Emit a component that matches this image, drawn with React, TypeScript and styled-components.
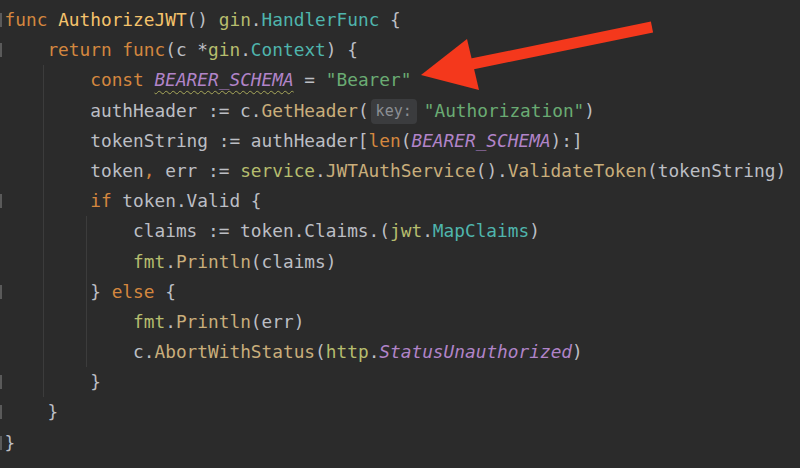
import styled, { createGlobalStyle, css } from "styled-components";

type Kind =
  | "txt"
  | "kw"
  | "fn"
  | "pkg"
  | "type"
  | "call"
  | "str"
  | "const"
  | "wavy"
  | "hint";

type Token = [Kind, string];

type CodeLine = {
  indent: number;
  guides: number[];
  fold?: boolean;
  tokens: Token[];
};

const lines: CodeLine[] = [
  {
    indent: 0,
    guides: [],
    fold: true,
    tokens: [
      ["kw", "func"],
      ["txt", " "],
      ["fn", "AuthorizeJWT"],
      ["txt", "() "],
      ["pkg", "gin"],
      ["txt", "."],
      ["type", "HandlerFunc"],
      ["txt", " {"],
    ],
  },
  {
    indent: 1,
    guides: [],
    fold: true,
    tokens: [
      ["kw", "return"],
      ["txt", " "],
      ["kw", "func"],
      ["txt", "(c *"],
      ["pkg", "gin"],
      ["txt", "."],
      ["type", "Context"],
      ["txt", ") {"],
    ],
  },
  {
    indent: 2,
    guides: [43],
    tokens: [
      ["kw", "const"],
      ["txt", " "],
      ["wavy", "BEARER_SCHEMA"],
      ["txt", " = "],
      ["str", '"Bearer"'],
    ],
  },
  {
    indent: 2,
    guides: [43],
    tokens: [
      ["txt", "authHeader := c."],
      ["call", "GetHeader"],
      ["txt", "("],
      ["hint", "key:"],
      ["str", '"Authorization"'],
      ["txt", ")"],
    ],
  },
  {
    indent: 2,
    guides: [43],
    tokens: [
      ["txt", "tokenString := authHeader["],
      ["kw", "len"],
      ["txt", "("],
      ["const", "BEARER_SCHEMA"],
      ["txt", "):]"],
    ],
  },
  {
    indent: 2,
    guides: [43],
    tokens: [
      ["txt", "token"],
      ["kw", ","],
      ["txt", " err := "],
      ["pkg", "service"],
      ["txt", "."],
      ["call", "JWTAuthService"],
      ["txt", "()."],
      ["call", "ValidateToken"],
      ["txt", "(tokenString)"],
    ],
  },
  {
    indent: 2,
    guides: [43],
    fold: true,
    tokens: [
      ["kw", "if"],
      ["txt", " token.Valid {"],
    ],
  },
  {
    indent: 3,
    guides: [43, 86],
    tokens: [
      ["txt", "claims := token.Claims.("],
      ["pkg", "jwt"],
      ["txt", "."],
      ["type", "MapClaims"],
      ["txt", ")"],
    ],
  },
  {
    indent: 3,
    guides: [43, 86],
    tokens: [
      ["pkg", "fmt"],
      ["txt", "."],
      ["call", "Println"],
      ["txt", "(claims)"],
    ],
  },
  {
    indent: 2,
    guides: [43, 86],
    fold: true,
    tokens: [
      ["txt", "} "],
      ["kw", "else"],
      ["txt", " {"],
    ],
  },
  {
    indent: 3,
    guides: [43, 86],
    tokens: [
      ["pkg", "fmt"],
      ["txt", "."],
      ["call", "Println"],
      ["txt", "(err)"],
    ],
  },
  {
    indent: 3,
    guides: [43, 86],
    tokens: [
      ["txt", "c."],
      ["call", "AbortWithStatus"],
      ["txt", "("],
      ["pkg", "http"],
      ["txt", "."],
      ["const", "StatusUnauthorized"],
      ["txt", ")"],
    ],
  },
  { indent: 2, guides: [43], fold: true, tokens: [["txt", "}"]] },
  { indent: 1, guides: [], fold: true, tokens: [["txt", "}"]] },
  { indent: 0, guides: [], fold: true, tokens: [["txt", "}"]] },
];

const colors: Record<Kind, string> = {
  txt: "#bcbec4",
  kw: "#d4873f",
  fn: "#f5c36c",
  pkg: "#b6bd6e",
  type: "#4fb5ad",
  call: "#c9ae7b",
  str: "#6aab73",
  const: "#b184c8",
  wavy: "#b184c8",
  hint: "#8c8f94",
};

const GlobalStyle = createGlobalStyle`
  html, body {
    margin: 0;
    padding: 0;
    background: #2b2b2b;
  }
  body {
    width: 800px;
    height: 468px;
    overflow: hidden;
  }
`;

const Editor = styled.div`
  position: relative;
  width: 800px;
  height: 468px;
  box-sizing: border-box;
  padding-top: 5px;
  background: #2b2b2b;
  font-family: "DejaVu Sans Mono", "Liberation Mono", monospace;
  font-size: 17.8px;
  overflow: hidden;
`;

const Line = styled.div<{ $indent: number; $guides: number[]; $fold?: boolean }>`
  height: 30.2px;
  line-height: 30.2px;
  white-space: pre;
  box-sizing: border-box;
  padding-left: ${(p) => `calc(4.6px + ${p.$indent * 4}ch)`};
  ${(p) => {
    const layers = p.$guides.map(
      (x) => `linear-gradient(#3c3c3c, #3c3c3c) no-repeat ${x}px 0 / 1px 100%`
    );
    if (p.$fold) {
      layers.push(`linear-gradient(#5a5a5a, #5a5a5a) no-repeat 0 8px / 2px 14px`);
    }
    return layers.length
      ? css`
          background: ${layers.join(", ")};
        `
      : "";
  }}
`;

const Tok = styled.span<{ $kind: Kind }>`
  color: ${(p) => colors[p.$kind]};
  ${(p) =>
    (p.$kind === "const" || p.$kind === "wavy") &&
    css`
      font-style: italic;
    `}
  ${(p) =>
    p.$kind === "wavy" &&
    css`
      text-decoration: underline wavy #a8a85a;
      text-decoration-thickness: 1px;
      text-underline-offset: 4px;
    `}
`;

const Hint = styled.span`
  display: inline-block;
  margin: 0 7px 0 2px;
  padding: 0 5px;
  height: 25px;
  line-height: 25px;
  vertical-align: 1px;
  border-radius: 4px;
  background: #3b3c3e;
  color: #8c8f94;
  font-size: 15px;
`;

const Arrow = styled.svg`
  position: absolute;
  left: 0;
  top: 0;
  pointer-events: none;
`;

export default function App() {
  return (
    <>
      <GlobalStyle />
      <Editor>
        {lines.map((line, i) => (
          <Line key={i} $indent={line.indent} $guides={line.guides} $fold={line.fold}>
            {line.tokens.map(([kind, text], j) =>
              kind === "hint" ? (
                <Hint key={j}>{text}</Hint>
              ) : (
                <Tok key={j} $kind={kind}>
                  {text}
                </Tok>
              )
            )}
          </Line>
        ))}
        <Arrow width="800" height="468" viewBox="0 0 800 468">
          <line x1="652" y1="27" x2="462" y2="66" stroke="#f4381c" strokeWidth="11" />
          <polygon points="421,75 467,39 479,90" fill="#f4381c" />
        </Arrow>
      </Editor>
    </>
  );
}
